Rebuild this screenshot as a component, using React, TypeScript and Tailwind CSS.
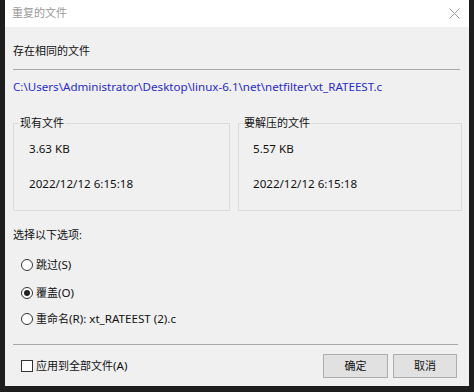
import React from "react";

const font = { fontFamily: '"Noto Sans", "Noto Sans CJK SC", sans-serif' };

function Radio({ checked, label, latin }: { checked?: boolean; label: string; latin: string }) {
  return (
    <div className="flex items-center h-[16px] ml-[8px]">
      <span className="w-[12px] h-[12px] rounded-full border border-[#333] bg-white flex items-center justify-center">
        {checked && <span className="w-[6px] h-[6px] rounded-full bg-[#222]" />}
      </span>
      <span className="ml-[3px] text-[11px] leading-[16px] text-[#111] whitespace-nowrap">
        {label}
        <span className="text-[11.6px]">{latin}</span>
      </span>
    </div>
  );
}

export default function App() {
  return (
    <div className="w-[474px] h-[392px] bg-[#1e1e1e] pl-[5px] pr-[5px] pb-[6px]" style={font}>
      <div className="w-[464px] h-[386px] bg-[#f0f0f0] flex flex-col">
        <div className="h-[27px] bg-white flex items-center justify-between pl-[7px] pr-[9px]">
          <span className="text-[11px] text-[#999]">重复的文件</span>
          <svg width="11" height="11" viewBox="0 0 11 11">
            <path d="M0.5 0.5 L10.5 10.5 M10.5 0.5 L0.5 10.5" stroke="#9a9a9a" strokeWidth="1" />
          </svg>
        </div>
        <div className="pl-[8px] flex flex-col text-[#111]">
          <div className="mt-[16px] h-[16px] text-[11px] leading-[16px]">存在相同的文件</div>
          <div className="mt-[10px] h-px w-[447px] bg-[#a8a8a8]" />
          <div className="mt-[9px] h-[16px] text-[11.6px] leading-[16px] text-[#2a2acc] whitespace-nowrap">
            C:\Users\Administrator\Desktop\linux-6.1\net\netfilter\xt_RATEEST.c
          </div>
          <div className="mt-[20px] flex gap-[8px]">
            <fieldset className="w-[217px] h-[96px] border border-[#dcdcdc]">
              <legend className="ml-[5px] px-[1px] text-[11px] leading-[16px]">现有文件</legend>
              <div className="pl-[15px]">
                <div className="mt-[10px] h-[16px] text-[11.6px] leading-[16px]">3.63 KB</div>
                <div className="mt-[19px] h-[16px] text-[11.6px] leading-[16px]">2022/12/12 6:15:18</div>
              </div>
            </fieldset>
            <fieldset className="w-[224px] h-[96px] border border-[#dcdcdc]">
              <legend className="ml-[4px] px-[1px] text-[11px] leading-[16px]">要解压的文件</legend>
              <div className="pl-[14px]">
                <div className="mt-[10px] h-[16px] text-[11.6px] leading-[16px]">5.57 KB</div>
                <div className="mt-[19px] h-[16px] text-[11.6px] leading-[16px]">2022/12/12 6:15:18</div>
              </div>
            </fieldset>
          </div>
          <div className="mt-[16px] h-[16px] text-[11px] leading-[16px]">选择以下选项:</div>
          <div className="mt-[14px]">
            <Radio label="跳过" latin="(S)" />
          </div>
          <div className="mt-[12px]">
            <Radio checked label="覆盖" latin="(O)" />
          </div>
          <div className="mt-[10px]">
            <Radio label="重命名" latin="(R): xt_RATEEST (2).c" />
          </div>
          <div className="mt-[17px] h-px w-[445px] bg-[#a8a8a8]" />
          <div className="mt-[9px] flex items-center w-[444px]">
            <div className="flex items-center ml-[8px] flex-1">
              <span className="w-[12px] h-[12px] border border-[#333] bg-white" />
              <span className="ml-[3px] text-[11px] leading-[16px]">
                应用到全部文件<span className="text-[11.6px]">(A)</span>
              </span>
            </div>
            <button className="w-[65px] h-[24px] bg-[#e1e1e1] border border-[#adadad] text-[11px] text-[#111]">确定</button>
            <button className="ml-[5px] w-[64px] h-[24px] bg-[#e1e1e1] border border-[#adadad] text-[11px] text-[#111]">取消</button>
          </div>
        </div>
      </div>
    </div>
  );
}
